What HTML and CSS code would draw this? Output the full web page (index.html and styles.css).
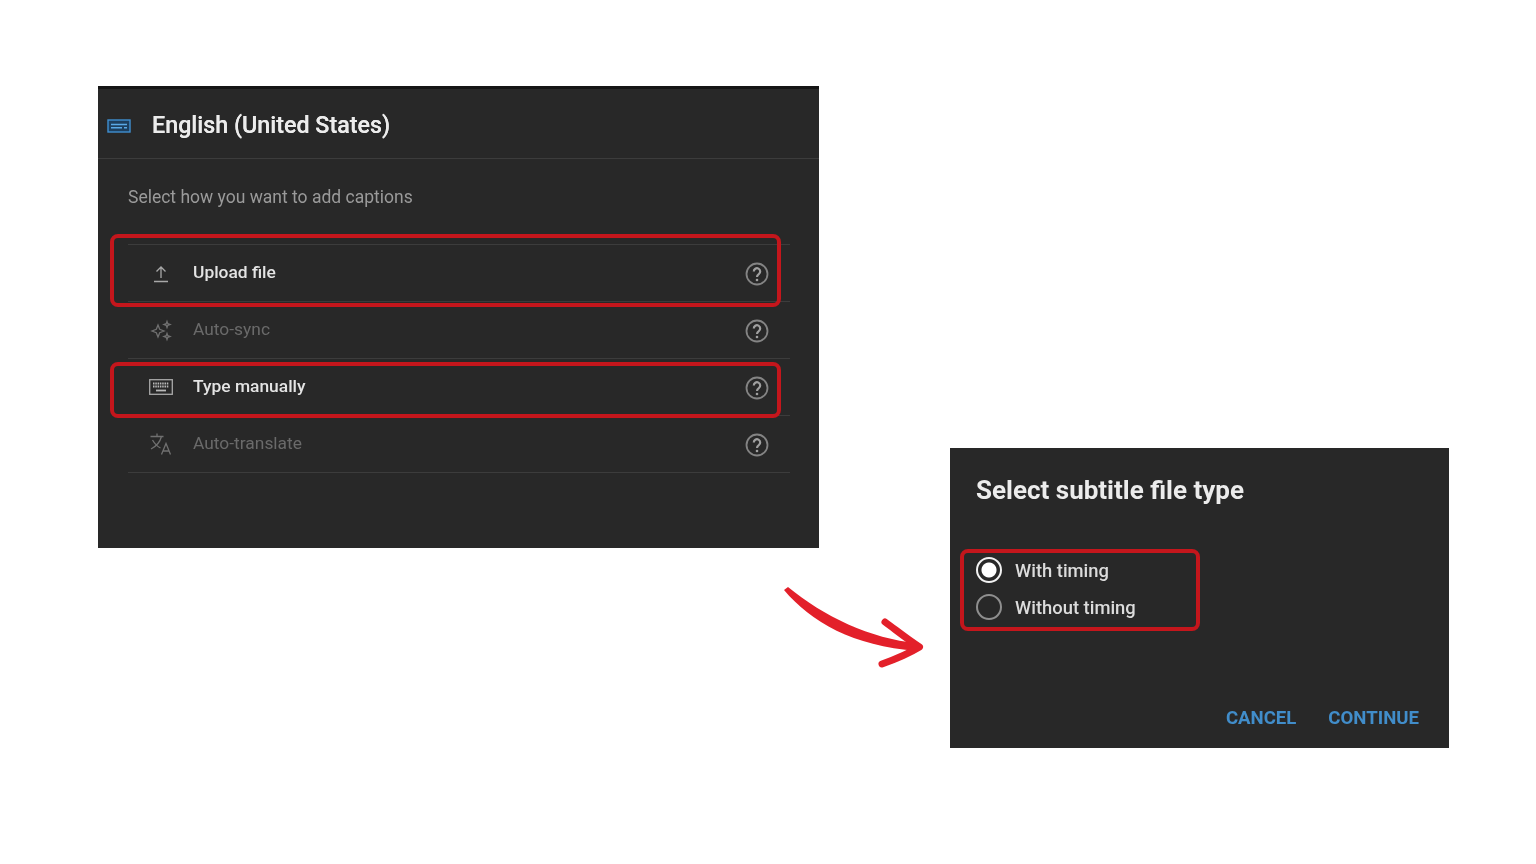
FILE: index.html
```html
<!DOCTYPE html>
<html lang="en">
<head>
<meta charset="utf-8">
<title>Add captions</title>
<link rel="stylesheet" href="styles.css">
</head>
<body>
<section class="panel captions">
  <header class="cap-head">
    <svg class="cc-icon" viewBox="0 0 24 14" width="24" height="14"><rect x="1" y="1" width="22" height="12" fill="#1d3f5e" stroke="#3f8fd0" stroke-width="1.4"/><path d="M4 5.500h16M4 8.800h11M17 8.800h3" stroke="#5aa9e6" stroke-width="1.500" fill="none"/></svg>
    <h1 class="cap-title">English (United States)</h1>
  </header>
  <p class="cap-lead">Select how you want to add captions</p>
  <ul class="options">
    <li class="option">
      <svg class="opt-icon" viewBox="0 0 24 24" width="24" height="24"><path d="M12 17V6M7.500 10.500L12 6 16.500 10.500M5 20.500h14" fill="none" stroke="#a8a8a8" stroke-width="1.300"/></svg>
      <span class="opt-label">Upload file</span>
      <svg class="help" viewBox="0 0 24 24" width="24" height="24"><circle cx="12" cy="12" r="10.500" fill="none" stroke="#848484" stroke-width="1.800"/><path d="M8.800 9.500a3.200 3.200 0 1 1 5 2.600c-1.200.8-1.800 1.400-1.800 2.900" fill="none" stroke="#a0a0a0" stroke-width="2.200"/><circle cx="12" cy="18" r="1.300" fill="#a0a0a0"/></svg>
    </li>
    <li class="option off">
      <svg class="opt-icon" viewBox="0 0 24 24" width="24" height="24"><path d="M9 7l1.700 4.300L15 13l-4.300 1.700L9 19l-1.700-4.300L3 13l4.300-1.700zM18 3.500l.8 2.200 2.200.8-2.200.8-.8 2.200-.8-2.200-2.200-.8 2.200-.8zM18 15.500l.8 2.200 2.200.8-2.200.8-.8 2.200-.8-2.200-2.200-.8 2.200-.8z" fill="none" stroke="#707070" stroke-width="1.300"/></svg>
      <span class="opt-label">Auto-sync</span>
      <svg class="help" viewBox="0 0 24 24" width="24" height="24"><circle cx="12" cy="12" r="10.500" fill="none" stroke="#848484" stroke-width="1.800"/><path d="M8.800 9.500a3.200 3.200 0 1 1 5 2.600c-1.200.8-1.800 1.400-1.800 2.900" fill="none" stroke="#a0a0a0" stroke-width="2.200"/><circle cx="12" cy="18" r="1.300" fill="#a0a0a0"/></svg>
    </li>
    <li class="option">
      <svg class="opt-icon" viewBox="0 0 24 16" width="24" height="16"><rect x=".7" y=".7" width="22.600" height="14.600" fill="none" stroke="#a8a8a8" stroke-width="1.300"/><path d="M4 4.500h16M4 7.500h16" stroke="#b8b8b8" stroke-width="1.800" stroke-dasharray="1.500 .8" fill="none"/><path d="M7 11.500h10" stroke="#b8b8b8" stroke-width="1.800"/></svg>
      <span class="opt-label">Type manually</span>
      <svg class="help" viewBox="0 0 24 24" width="24" height="24"><circle cx="12" cy="12" r="10.500" fill="none" stroke="#848484" stroke-width="1.800"/><path d="M8.800 9.500a3.200 3.200 0 1 1 5 2.600c-1.200.8-1.800 1.400-1.800 2.900" fill="none" stroke="#a0a0a0" stroke-width="2.200"/><circle cx="12" cy="18" r="1.300" fill="#a0a0a0"/></svg>
    </li>
    <li class="option off">
      <svg class="opt-icon" viewBox="0 0 24 24" width="24" height="24"><path d="M1.500 4.500h13M8 1.500v3M12.500 4.500C11 10 7 14.500 2 17M3.500 8c2 3.500 5 6.500 8 8M12.500 22.500l4.500-11 4.500 11M14 19h6" fill="none" stroke="#707070" stroke-width="1.300"/></svg>
      <span class="opt-label">Auto-translate</span>
      <svg class="help" viewBox="0 0 24 24" width="24" height="24"><circle cx="12" cy="12" r="10.500" fill="none" stroke="#848484" stroke-width="1.800"/><path d="M8.800 9.500a3.200 3.200 0 1 1 5 2.600c-1.200.8-1.800 1.400-1.800 2.900" fill="none" stroke="#a0a0a0" stroke-width="2.200"/><circle cx="12" cy="18" r="1.300" fill="#a0a0a0"/></svg>
    </li>
  </ul>
  <div class="mark mark-upload"></div>
  <div class="mark mark-type"></div>
</section>

<svg class="arrow" viewBox="0 0 144 84" width="144" height="84"><path d="M1 4C28 36 70 60 134 65L134 57C88 53 40 30 5 1Z" fill="#e3202a"/><path d="M102 36C113 44 124 53 136.500 61C125 68 113 73 99 78" fill="none" stroke="#e3202a" stroke-width="7" stroke-linecap="round" stroke-linejoin="round"/></svg>

<section class="panel filetype">
  <h2 class="type-title">Select subtitle file type</h2>
  <div class="radios">
    <div class="radio-row"><span class="radio on"></span><span class="radio-label">With timing</span></div>
    <div class="radio-row"><span class="radio"></span><span class="radio-label">Without timing</span></div>
  </div>
  <div class="actions"><span class="action">CANCEL</span><span class="action">CONTINUE</span></div>
  <div class="mark mark-radios"></div>
</section>
</body>
</html>
```
FILE: styles.css
```css
* { box-sizing: border-box; }
html, body { margin: 0; height: 100%; }
body { position: relative; width: 1536px; height: 864px; overflow: hidden; background: #fff; font-family: Roboto, "Liberation Sans", sans-serif; }
.panel { position: absolute; background: #282828; filter: blur(.45px); }
.captions { left: 98px; top: 86px; width: 721px; height: 462px; border-top: 3px solid #151515; }
.cap-head { display: flex; align-items: center; height: 70px; padding: 2px 0 0 9px; border-bottom: 1px solid #3c3c3c; }
.cc-icon { flex: none; margin-top: 3px; }
.cap-title { margin: 0 0 0 21px; font-size: 23.3px; font-weight: 500; color: #ececec; text-shadow: 0 0 .5px #ececec; }
.cap-lead { margin: 27px 0 0 30px; font-size: 17.5px; line-height: 22px; color: #9a9a9a; }
.options { list-style: none; margin: 36px 29px 0 30px; padding: 0; border-top: 1px solid #3c3c3c; }
.option { display: flex; align-items: center; height: 57px; padding: 0 21px; border-bottom: 1px solid #3c3c3c; }
.opt-icon { flex: none; }
.opt-label { flex: 1; margin-left: 20px; padding-bottom: 2px; font-size: 17.4px; font-weight: 500; color: #e4e4e4; }
.off .opt-label { font-weight: 400; color: #6a6a6a; }
.help { flex: none; margin-top: 1px; }
.mark { position: absolute; border: 4px solid #c4161c; border-radius: 8px; }
.mark-upload { left: 12px; top: 145px; width: 671px; height: 73px; }
.mark-type { left: 12px; top: 273px; width: 671px; height: 56px; }
.arrow { position: absolute; left: 783px; top: 586px; }
.filetype { left: 950px; top: 448px; width: 499px; height: 300px; }
.type-title { margin: 24px 0 0 26px; font-size: 26px; line-height: 36px; font-weight: 700; color: #ececec; }
.radios { display: flex; flex-direction: column; gap: 11px; margin: 49px 0 0 26px; }
.radio-row { display: flex; align-items: center; gap: 13px; height: 26px; }
.radio { width: 26px; height: 26px; border-radius: 50%; border: 2.500px solid #8f8f8f; }
.radio.on { border-color: #f2f2f2; background: radial-gradient(circle, #fff 0 7px, #282828 8px); }
.radio-label { font-size: 18.4px; font-weight: 500; color: #dcdcdc; }
.actions { display: flex; justify-content: flex-end; gap: 32px; margin: 87px 30px 0 0; }
.action { font-size: 18.6px; font-weight: 700; color: #418dca; }
.mark-radios { left: 10px; top: 101px; width: 240px; height: 82px; }
```
